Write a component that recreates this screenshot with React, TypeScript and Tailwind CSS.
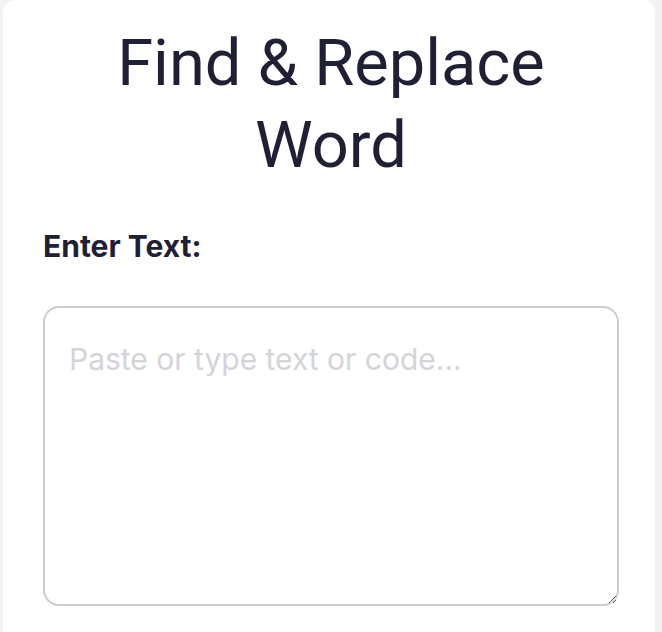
export default function App() {
  return (
    <div className="min-h-screen bg-[#f3f3f3] pl-[3px] pr-[7px] font-['Roboto','Liberation_Sans',sans-serif]">
      <div className="flex h-[632px] flex-col overflow-hidden rounded-t-xl bg-white px-[40px] pt-[22px]">
        <h1 className="pl-[4px] text-center text-[65px] leading-[82px] font-normal text-[#1f2033]">
          Find &amp; Replace Word
        </h1>
        <label className="mt-[40px] block font-['Inter','Liberation_Sans',sans-serif] text-[30px] font-bold leading-[40px] text-[#1f2033]">
          Enter Text:
        </label>
        <textarea
          className="mt-[40px] block h-[300px] w-[576px] rounded-2xl border-2 border-[#cccccc] px-6 pt-[33px] pb-[27px] font-['Inter','Liberation_Sans',sans-serif] text-[30px] leading-[36px] text-[#1f2033] outline-none placeholder:text-[#d4d4d8]"
          placeholder="Paste or type text or code..."
        />
      </div>
    </div>
  );
}
